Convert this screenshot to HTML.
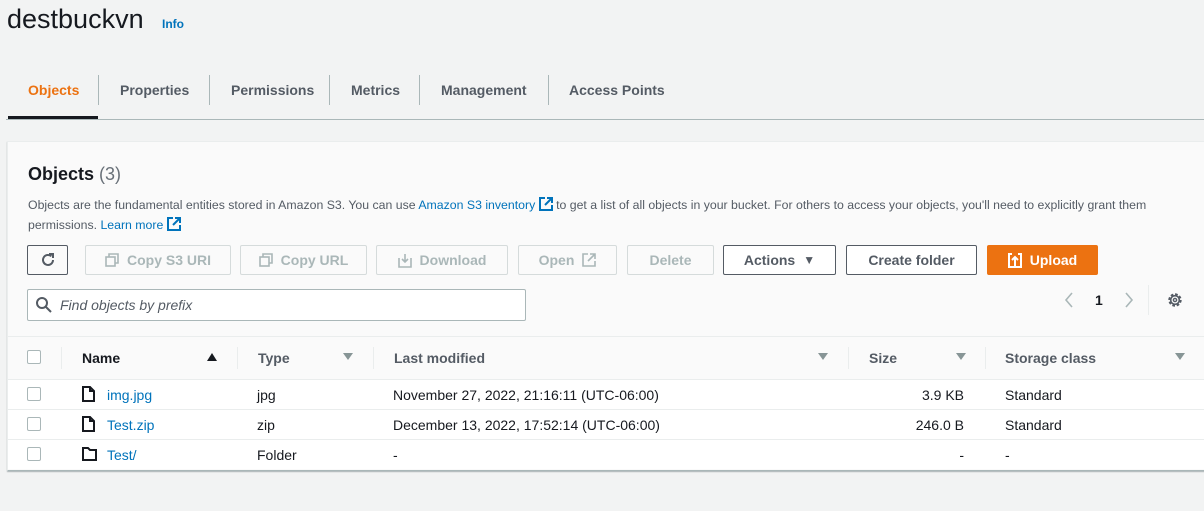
<!DOCTYPE html>
<html><head><style>
*{box-sizing:border-box;margin:0;padding:0}
body{width:1204px;height:511px;background:#f2f3f3;font-family:"Liberation Sans",sans-serif;color:#16191f;position:relative;overflow:hidden;font-size:14px}
.a{position:absolute;white-space:nowrap}
.tab{position:absolute;top:82px;font-weight:bold;color:#545b64;font-size:14px}
.sep{position:absolute;top:75px;width:1px;height:30px;background:#aab7b8}
.btn{position:absolute;top:245px;height:30px;border:1px solid #d5dbdb;border-radius:2px;font-weight:bold;color:#aab7b8;font-size:14px;display:flex;align-items:center;justify-content:center;gap:8px;background:#fafafa}
.btn.d{border-color:#545b64;color:#545b64}
.row{position:absolute;left:8px;width:1196px;height:30px;border-top:1px solid #eaeded;background:#fff}
.cb{position:absolute;left:27px;width:14px;height:14px;border:1px solid #aab7b8;border-radius:2px;background:#fff}
.h{position:absolute;top:350px;font-weight:bold;color:#545b64}
.vs{position:absolute;top:347px;width:1px;height:22px;background:#eaeded}
.tri{position:absolute;top:353px;width:0;height:0;border-left:5px solid transparent;border-right:5px solid transparent;border-top:7px solid #879596}
.lk{color:#0073bb}
.ext{display:inline-block;vertical-align:-2px}
</style></head><body>
<div class="a" style="left:7px;top:4px;font-size:27px;color:#16191f">destbuckvn</div>
<div class="a lk" style="left:162px;top:17px;font-size:12px;font-weight:bold">Info</div>

<div class="tab" style="left:28px;color:#ec7211">Objects</div>
<div class="sep" style="left:98px"></div>
<div class="tab" style="left:120px">Properties</div>
<div class="sep" style="left:209px"></div>
<div class="tab" style="left:231px">Permissions</div>
<div class="sep" style="left:329px"></div>
<div class="tab" style="left:351px">Metrics</div>
<div class="sep" style="left:419px"></div>
<div class="tab" style="left:441px">Management</div>
<div class="sep" style="left:548px"></div>
<div class="tab" style="left:569px">Access Points</div>
<div class="a" style="left:8px;top:116px;width:90px;height:3px;background:#16191f"></div>
<div class="a" style="left:6px;top:119px;width:1198px;height:1px;background:#aab7b8"></div>

<div class="a" style="left:7px;top:141px;width:1200px;height:330px;background:#fafafa;border-top:1px solid #eaeded;border-left:1px solid #eaeded;border-bottom:1px solid #aab7b8;box-shadow:0 1px 1px rgba(0,28,36,.3)"></div>
<div class="a" style="left:28px;top:164px;font-size:18px;font-weight:bold">Objects <span style="font-weight:normal;color:#687078">(3)</span></div>
<div class="a" style="left:28px;top:195px;font-size:12.3px;color:#545b64;line-height:20px;white-space:normal;width:1160px">Objects are the fundamental entities stored in Amazon S3. You can use <span class="lk">Amazon S3 inventory</span> <svg class="ext" width="14" height="14" viewBox="0 0 14 14"><path d="M6 1H1v12h12V8" fill="none" stroke="#0073bb" stroke-width="2"/><path d="M8 1h5v5M13 1L6 8" fill="none" stroke="#0073bb" stroke-width="2"/></svg> to get a list of all objects in your bucket. For others to access your objects, you'll need to explicitly grant them permissions. <span class="lk">Learn more</span> <svg class="ext" width="14" height="14" viewBox="0 0 14 14"><path d="M6 1H1v12h12V8" fill="none" stroke="#0073bb" stroke-width="2"/><path d="M8 1h5v5M13 1L6 8" fill="none" stroke="#0073bb" stroke-width="2"/></svg></div>

<div class="btn d" style="left:27px;width:41px"><svg width="18" height="18" viewBox="0 0 18 18"><path d="M14 9a5 5 0 1 1-1.6-3.7" fill="none" stroke="#545b64" stroke-width="2"/><path d="M10 3h4v4" fill="none" stroke="#545b64" stroke-width="2"/></svg></div>
<div class="btn" style="left:85px;width:146px"><svg width="14" height="14"><rect x="1" y="4" width="9" height="9" fill="none" stroke="#aab7b8" stroke-width="1.6"/><path d="M4 4V1h9v9h-3" fill="none" stroke="#aab7b8" stroke-width="1.6"/></svg>Copy S3 URI</div>
<div class="btn" style="left:240px;width:127px"><svg width="14" height="14"><rect x="1" y="4" width="9" height="9" fill="none" stroke="#aab7b8" stroke-width="1.6"/><path d="M4 4V1h9v9h-3" fill="none" stroke="#aab7b8" stroke-width="1.6"/></svg>Copy URL</div>
<div class="btn" style="left:376px;width:132px"><svg width="14" height="15"><path d="M1 5v9h12V5" fill="none" stroke="#aab7b8" stroke-width="1.6"/><path d="M7 1v8M4 6l3 3 3-3" fill="none" stroke="#aab7b8" stroke-width="1.6"/></svg>Download</div>
<div class="btn" style="left:518px;width:99px">Open <svg width="14" height="14"><path d="M6 1H1v12h12V8" fill="none" stroke="#aab7b8" stroke-width="1.6"/><path d="M8 1h5v5M13 1L6 8" fill="none" stroke="#aab7b8" stroke-width="1.6"/></svg></div>
<div class="btn" style="left:627px;width:87px">Delete</div>
<div class="btn d" style="left:723px;width:113px;background:#fff">Actions <span style="font-size:12px">▼</span></div>
<div class="btn d" style="left:846px;width:131px;background:#fff">Create folder</div>
<div class="btn" style="left:987px;width:111px;background:#ec7211;border-color:#ec7211;color:#fff"><svg width="14" height="15"><path d="M4 1H1v13h12V1h-3" fill="none" stroke="#fff" stroke-width="2"/><path d="M7 13V4M4 7l3-3 3 3" fill="none" stroke="#fff" stroke-width="2"/></svg> Upload</div>

<div class="a" style="left:27px;top:289px;width:499px;height:32px;border:1px solid #aab7b8;border-radius:2px;background:#fff"></div>
<svg class="a" style="left:35px;top:296px" width="18" height="18" viewBox="0 0 18 18"><circle cx="7" cy="7" r="5" fill="none" stroke="#545b64" stroke-width="2"/><path d="M11 11l5 5" stroke="#545b64" stroke-width="2"/></svg>
<div class="a" style="left:60px;top:297px;font-style:italic;color:#545b64">Find objects by prefix</div>

<svg class="a" style="left:1064px;top:292px" width="10" height="16"><path d="M8 1L2 8l6 7" fill="none" stroke="#aab7b8" stroke-width="1.6"/></svg>
<div class="a" style="left:1095px;top:292px;font-weight:bold">1</div>
<svg class="a" style="left:1124px;top:292px" width="10" height="16"><path d="M2 1l6 7-6 7" fill="none" stroke="#aab7b8" stroke-width="1.6"/></svg>
<div class="a" style="left:1148px;top:285px;width:1px;height:30px;background:#eaeded"></div>
<svg class="a" style="left:1166px;top:291px" width="18" height="18" viewBox="0 0 18 18"><circle cx="9" cy="9" r="5.5" fill="none" stroke="#545b64" stroke-width="2.4" stroke-dasharray="2.6 1.7"/><circle cx="9" cy="9" r="4.3" fill="none" stroke="#545b64" stroke-width="1.6"/><circle cx="9" cy="9" r="1.6" fill="none" stroke="#545b64" stroke-width="1.4"/></svg>

<div class="a" style="left:8px;top:336px;width:1196px;height:1px;background:#eaeded"></div>
<div class="cb" style="top:350px"></div>
<div class="vs" style="left:61px"></div>
<div class="h" style="left:82px;color:#16191f">Name</div>
<div class="a" style="left:207px;top:353px;width:0;height:0;border-left:5px solid transparent;border-right:5px solid transparent;border-bottom:8px solid #16191f"></div>
<div class="vs" style="left:237px"></div>
<div class="h" style="left:258px">Type</div><div class="tri" style="left:343px"></div>
<div class="vs" style="left:373px"></div>
<div class="h" style="left:394px">Last modified</div><div class="tri" style="left:818px"></div>
<div class="vs" style="left:848px"></div>
<div class="h" style="left:869px">Size</div><div class="tri" style="left:956px"></div>
<div class="vs" style="left:985px"></div>
<div class="h" style="left:1005px">Storage class</div><div class="tri" style="left:1175px"></div>

<div class="row" style="top:379px"></div>
<div class="row" style="top:409px"></div>
<div class="row" style="top:439px"></div>
<div class="cb" style="top:387px"></div><div class="cb" style="top:417px"></div><div class="cb" style="top:447px"></div>
<svg class="a" style="left:82px;top:386px" width="14" height="16"><path d="M1 1h7l4 4v10H1z" fill="none" stroke="#16191f" stroke-width="2"/><path d="M8 1v4h4" fill="none" stroke="#16191f" stroke-width="2"/></svg>
<svg class="a" style="left:82px;top:416px" width="14" height="16"><path d="M1 1h7l4 4v10H1z" fill="none" stroke="#16191f" stroke-width="2"/><path d="M8 1v4h4" fill="none" stroke="#16191f" stroke-width="2"/></svg>
<svg class="a" style="left:82px;top:447px" width="15" height="14"><path d="M1 1h5l2 2h6v10H1z" fill="none" stroke="#16191f" stroke-width="2"/></svg>
<div class="a lk" style="left:107px;top:387px">img.jpg</div>
<div class="a lk" style="left:107px;top:417px">Test.zip</div>
<div class="a lk" style="left:107px;top:447px">Test/</div>
<div class="a" style="left:257px;top:387px">jpg</div>
<div class="a" style="left:257px;top:417px">zip</div>
<div class="a" style="left:257px;top:447px">Folder</div>
<div class="a" style="left:393px;top:387px">November 27, 2022, 21:16:11 (UTC-06:00)</div>
<div class="a" style="left:393px;top:417px">December 13, 2022, 17:52:14 (UTC-06:00)</div>
<div class="a" style="left:393px;top:447px">-</div>
<div class="a" style="right:240px;top:387px">3.9 KB</div>
<div class="a" style="right:240px;top:417px">246.0 B</div>
<div class="a" style="right:240px;top:447px">-</div>
<div class="a" style="left:1005px;top:387px">Standard</div>
<div class="a" style="left:1005px;top:417px">Standard</div>
<div class="a" style="left:1005px;top:447px">-</div>
</body></html>
